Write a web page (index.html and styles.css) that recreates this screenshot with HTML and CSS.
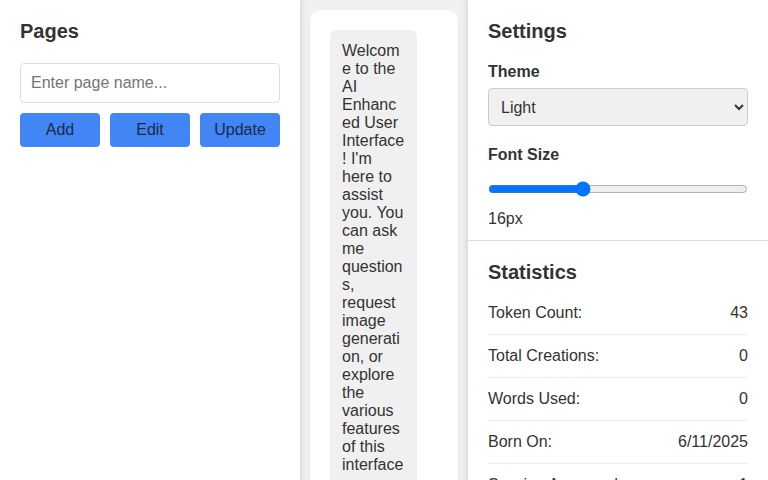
FILE: index.html
```html
<!DOCTYPE html>
<html>
<head>
  <title>AI Enhanced User Interface</title>
  <link rel="stylesheet" href="styles.css">
</head>
<body>
  <div class="app">
    <!-- Sidebar halaman -->
    <div class="sidebar left">
      <h2>Pages</h2>
      <input type="text" class="page-input" placeholder="Enter page name...">
      <div class="page-buttons">
        <button>Add</button>
        <button>Edit</button>
        <button>Update</button>
      </div>
    </div>

    <!-- Area chat -->
    <div class="main">
      <div class="chat">
        <div class="message">Welcome to the AI Enhanced User Interface! I'm here to assist you. You can ask me questions, request image generation, or explore the various features of this interface.</div>
      </div>
    </div>

    <!-- Sidebar pengaturan -->
    <div class="sidebar right">
      <div class="section">
        <h2>Settings</h2>
        <label class="field-label" for="theme">Theme</label>
        <select id="theme" class="theme-select">
          <option>Light</option>
          <option>Dark</option>
        </select>
        <label class="field-label size-label" for="fontSize">Font Size</label>
        <input type="range" id="fontSize" class="size-range" min="11" max="25" value="16">
        <div class="size-value">16px</div>
      </div>
      <div class="section">
        <h2>Statistics</h2>
        <div class="stat"><span>Token Count:</span><span>43</span></div>
        <div class="stat"><span>Total Creations:</span><span>0</span></div>
        <div class="stat"><span>Words Used:</span><span>0</span></div>
        <div class="stat"><span>Born On:</span><span>6/11/2025</span></div>
        <div class="stat"><span>Session Accessed:</span><span>1</span></div>
      </div>
    </div>
  </div>
</body>
</html>
```

FILE: styles.css
```css
/* dasar */
* {
  box-sizing: border-box;
}

body {
  margin: 0;
  font-family: "Liberation Sans", Arial, sans-serif;
  font-size: 16px;
  color: #333;
  background-color: #f0f0f0;
  overflow: hidden;
}

.app {
  display: flex;
  min-height: 100vh;
}

h2 {
  margin: 0 0 20px;
  font-size: 20px;
  line-height: 23px;
}

/* sidebar */
.sidebar {
  width: 300px;
  flex-shrink: 0;
  background-color: #fff;
  position: relative;
  z-index: 1;
}

.sidebar.left {
  padding: 20px;
  box-shadow: 2px 0 5px rgba(0, 0, 0, 0.1);
}

.sidebar.right {
  box-shadow: -2px 0 5px rgba(0, 0, 0, 0.1);
}

.page-input {
  display: block;
  width: 100%;
  height: 40px;
  padding: 0 10px;
  border: 1px solid #ddd;
  border-radius: 4px;
  font-family: inherit;
  font-size: 16px;
  color: #333;
}

.page-input::placeholder {
  color: #757575;
}

.page-buttons {
  display: flex;
  justify-content: space-between;
  margin-top: 10px;
}

.page-buttons button {
  width: 80px;
  height: 34px;
  border: none;
  border-radius: 4px;
  background-color: #4285f4;
  color: #1b2b48;
  font-family: inherit;
  font-size: 16px;
}

/* area chat */
.main {
  flex: 1;
  padding: 10px;
}

.chat {
  padding: 20px;
  background-color: #fff;
  border-radius: 10px;
  box-shadow: 0 1px 3px rgba(0, 0, 0, 0.06);
}

.message {
  width: 86.5px;
  padding: 12px;
  background-color: #f0f0f0;
  border-radius: 6px;
  line-height: 18px;
  overflow-wrap: break-word;
  word-break: break-word;
}

/* pengaturan */
.section {
  padding: 20px;
  border-bottom: 1px solid #ddd;
}

.section:first-child {
  padding-bottom: 12px;
}

.field-label {
  display: block;
  font-weight: bold;
  line-height: 18px;
  margin-bottom: 7px;
}

.theme-select {
  display: block;
  width: 100%;
  height: 38px;
  padding: 0 8px;
  border: 1px solid #ccc;
  border-radius: 4px;
  background-color: #f0f0f0;
  font-family: inherit;
  font-size: 16px;
  color: #333;
}

.size-label {
  margin-top: 20px;
}

.size-range {
  display: block;
  width: 100%;
  margin: 17px 0 0;
}

.size-value {
  margin-top: 13px;
  line-height: 18px;
}

.stat {
  display: flex;
  justify-content: space-between;
  padding: 12px 0;
  line-height: 18px;
  border-bottom: 1px solid #eee;
}

.section h2 + .stat {
  margin-top: -12px;
}
```
